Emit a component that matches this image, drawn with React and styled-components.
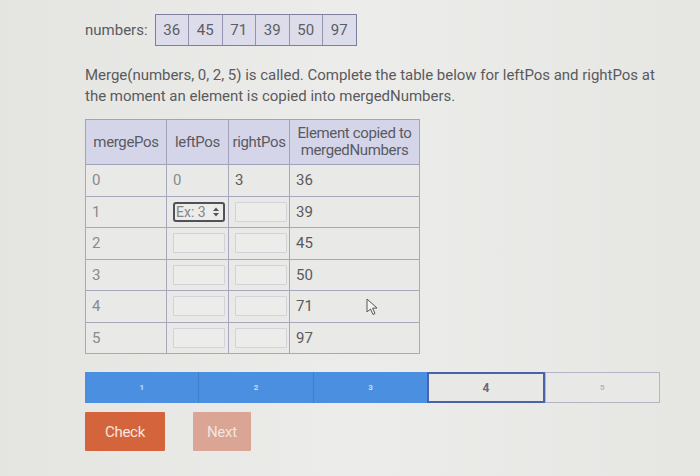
import React from "react";
import styled, { createGlobalStyle } from "styled-components";

const Global = createGlobalStyle`
  html, body {
    margin: 0;
    padding: 0;
    background: #e7e8e4;
  }
  body {
    font-family: Roboto, "Liberation Sans", sans-serif;
    color: #5a5a5e;
  }
`;

const Page = styled.div`
  width: 700px;
  height: 476px;
  padding: 14px 0 0 85px;
  box-sizing: border-box;
  background: linear-gradient(90deg, #e4e5e1 0%, #ecedea 50%, #e6e7e3 100%);
`;

const ArrayRow = styled.div`
  display: flex;
  align-items: center;
  gap: 7px;
  font-size: 15px;
`;

const ArrayBox = styled.div`
  display: flex;
  border: 1.5px solid #7e7e9e;
  background: #dddcea;
  height: 30px;
`;

const ArrayCell = styled.div`
  width: 32.5px;
  display: flex;
  align-items: center;
  justify-content: center;
  font-size: 15px;
  color: #5c5c64;
  border-left: ${(p) => (p.first ? "none" : "1px solid #9494b0")};
`;

const Prompt = styled.p`
  margin: 19px 0 0;
  width: 585px;
  font-size: 15px;
  line-height: 21px;
  color: #5a5a5e;
  letter-spacing: -0.02px;
`;

const Table = styled.table`
  margin-top: 12px;
  border-collapse: collapse;
  border: 1.5px solid #9a9ab2;
  font-size: 15px;
`;

const Th = styled.th`
  background: #d5d5ea;
  font-weight: normal;
  color: #5a5a62;
  border: 1px solid #a2a2ba;
  height: 44px;
  padding: 0;
  line-height: 17px;
  letter-spacing: -0.35px;
  width: ${(p) => p.w}px;
  text-align: center;
`;

const Td = styled.td`
  border: 1px solid #a8a8bc;
  height: 30.5px;
  padding: 0 0 0 6px;
  color: ${(p) => (p.faded ? "#8a8a8e" : "#5a5a5e")};
  background: #e9e9e7;
  text-align: left;
`;

const InputSlot = styled.div`
  width: 52px;
  height: 20px;
  border: 1px solid ${(p) => (p.active ? "#505058" : "#d2d2d8")};
  border-width: ${(p) => (p.active ? "2px" : "1px")};
  border-radius: ${(p) => (p.active ? "3px" : "1px")};
  background: #ececea;
  display: flex;
  align-items: center;
  justify-content: space-between;
  padding: 0 3px 0 1px;
  box-sizing: border-box;
  font-size: 14px;
  color: #85858a;
`;

const Spinner = styled.svg`
  width: 8px;
  height: 12px;
`;

const Progress = styled.div`
  display: flex;
  margin-top: 18px;
  width: 575px;
  height: 31px;
`;

const Segment = styled.div`
  flex: 1;
  display: flex;
  align-items: center;
  justify-content: center;
  font-size: ${(p) => (p.current ? "12px" : "8px")};
  font-weight: bold;
  box-sizing: border-box;
  background: ${(p) => (p.done ? "#4a8fe0" : "#e8e8e6")};
  color: ${(p) => (p.done ? "#c9def5" : p.current ? "#6a6a74" : "#b6b6ba")};
  border: ${(p) =>
    p.done ? "none" : p.current ? "2px solid #4a62a8" : "1.5px solid #b4b4c2"};
  border-left: ${(p) => (p.done && !p.first ? "1px solid #3f7fcc" : undefined)};
`;

const Buttons = styled.div`
  display: flex;
  gap: 28px;
  margin-top: 9px;
`;

const Button = styled.button`
  height: 39px;
  padding: 0 ${(p) => (p.disabled ? "14px" : "20px")};
  border: none;
  border-radius: 1px;
  font-family: Roboto, "Liberation Sans", sans-serif;
  font-size: 15px;
  letter-spacing: -0.3px;
  color: ${(p) => (p.disabled ? "#f3e4de" : "#f6e6dc")};
  background: ${(p) => (p.disabled ? "#daa594" : "#d3643c")};
`;

const rows = [
  { m: 0, l: "0", r: "3", e: 36 },
  { m: 1, l: "ex", r: "", e: 39 },
  { m: 2, e: 45 },
  { m: 3, e: 50 },
  { m: 4, e: 71 },
  { m: 5, e: 97 },
];

const Cursor = () => (
  <svg width="16" height="18" viewBox="0 0 16 18" style={{ marginLeft: 52, verticalAlign: "middle" }}>
    <path d="M2 1 L2 14 L5.5 11 L8 16.5 L10 15.5 L7.6 10.2 L12 10 Z" fill="#f4f4f4" stroke="#55555a" strokeWidth="1" />
  </svg>
);

export default function App() {
  return (
    <Page>
      <Global />
      <ArrayRow>
        <span>numbers:</span>
        <ArrayBox>
          {[36, 45, 71, 39, 50, 97].map((n, i) => (
            <ArrayCell key={i} first={i === 0}>
              {n}
            </ArrayCell>
          ))}
        </ArrayBox>
      </ArrayRow>
      <Prompt>
        Merge(numbers, 0, 2, 5) is called. Complete the table below for leftPos and rightPos at the moment an element
        is copied into mergedNumbers.
      </Prompt>
      <Table>
        <thead>
          <tr>
            <Th w={80}>mergePos</Th>
            <Th w={61}>leftPos</Th>
            <Th w={60}>rightPos</Th>
            <Th w={129}>
              Element copied to
              <br />
              mergedNumbers
            </Th>
          </tr>
        </thead>
        <tbody>
          {rows.map((r) => (
            <tr key={r.m}>
              <Td faded>{r.m}</Td>
              <Td faded>
                {r.m === 0 ? (
                  r.l
                ) : r.m === 1 ? (
                  <InputSlot active>
                    Ex: 3
                    <Spinner viewBox="0 0 8 12">
                      <path d="M1 5 L4 1.5 L7 5 Z M1 7 L4 10.5 L7 7 Z" fill="#55555c" />
                    </Spinner>
                  </InputSlot>
                ) : (
                  <InputSlot />
                )}
              </Td>
              <Td>{r.m === 0 ? r.r : <InputSlot />}</Td>
              <Td>
                {r.e}
                {r.m === 4 && <Cursor />}
              </Td>
            </tr>
          ))}
        </tbody>
      </Table>
      <Progress>
        <Segment done first>1</Segment>
        <Segment done>2</Segment>
        <Segment done>3</Segment>
        <Segment current>4</Segment>
        <Segment>5</Segment>
      </Progress>
      <Buttons>
        <Button>Check</Button>
        <Button disabled>Next</Button>
      </Buttons>
    </Page>
  );
}
